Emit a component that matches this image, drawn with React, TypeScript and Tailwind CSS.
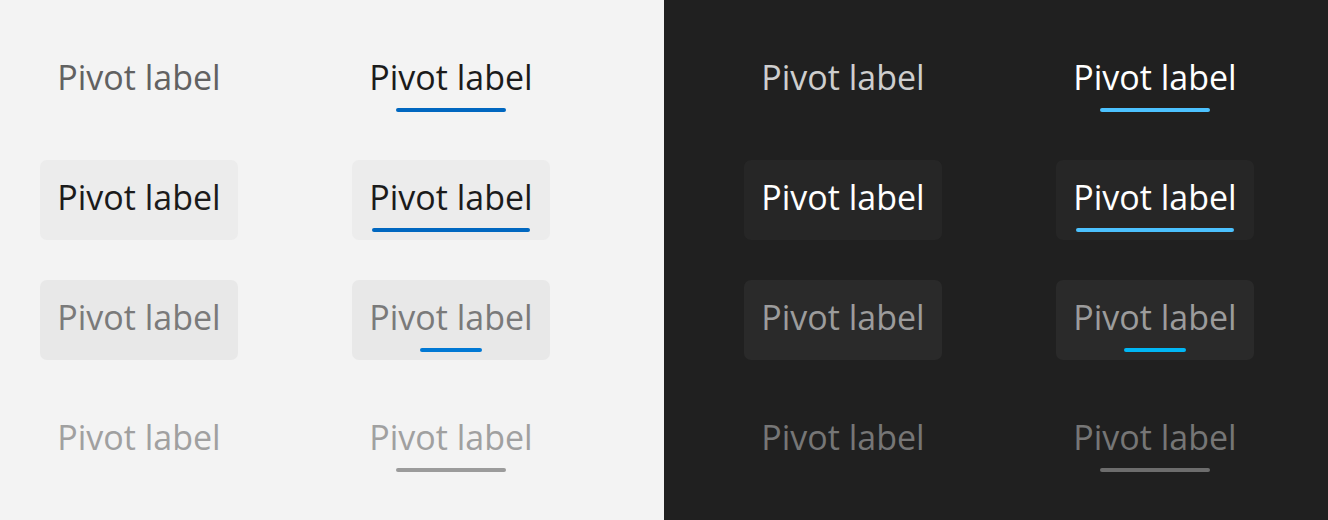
type Variant = 'rest' | 'selected' | 'hover' | 'hoverSelected' | 'pressed' | 'pressedSelected' | 'disabled' | 'disabledSelected'

type Theme = 'light' | 'dark'

interface PivotItemProps {
  theme: Theme
  variant: Variant
}

const styles: Record<Theme, Record<Variant, { box: string; text: string; bar?: string }>> = {
  light: {
    rest: { box: '', text: 'text-[#616161]' },
    selected: { box: '', text: 'text-[#1b1b1b]', bar: 'w-[110px] bg-[#0067c0]' },
    hover: { box: 'bg-[#ececec]', text: 'text-[#1b1b1b]' },
    hoverSelected: { box: 'bg-[#ececec]', text: 'text-[#1b1b1b]', bar: 'w-[158px] bg-[#0067c0]' },
    pressed: { box: 'bg-[#e8e8e8]', text: 'text-[#7a7a7a]' },
    pressedSelected: { box: 'bg-[#e8e8e8]', text: 'text-[#7a7a7a]', bar: 'w-[62px] bg-[#0078d4]' },
    disabled: { box: '', text: 'text-[#a0a0a0]' },
    disabledSelected: { box: '', text: 'text-[#a0a0a0]', bar: 'w-[110px] bg-[#9b9b9b]' },
  },
  dark: {
    rest: { box: '', text: 'text-[#cecece]' },
    selected: { box: '', text: 'text-white', bar: 'w-[110px] bg-[#4cc2ff]' },
    hover: { box: 'bg-[#262626]', text: 'text-white' },
    hoverSelected: { box: 'bg-[#262626]', text: 'text-white', bar: 'w-[158px] bg-[#4cc2ff]' },
    pressed: { box: 'bg-[#2a2a2a]', text: 'text-[#9c9c9c]' },
    pressedSelected: { box: 'bg-[#2a2a2a]', text: 'text-[#9c9c9c]', bar: 'w-[62px] bg-[#00b7f5]' },
    disabled: { box: '', text: 'text-[#767676]' },
    disabledSelected: { box: '', text: 'text-[#767676]', bar: 'w-[110px] bg-[#6d6d6d]' },
  },
}

const PivotItem = ({ theme, variant }: PivotItemProps) => {
  const s = styles[theme][variant]
  return (
    <div className={`relative flex h-[80px] w-[198px] items-center justify-center rounded-[7px] ${s.box}`}>
      <span className={`-mt-[7px] text-[34px] leading-none ${s.text}`}>Pivot label</span>
      {s.bar && (
        <div className="absolute bottom-[8px] left-0 right-0 flex justify-center">
          <div className={`h-[4px] rounded-full ${s.bar}`} />
        </div>
      )}
    </div>
  )
}

const rows: [Variant, Variant][] = [
  ['rest', 'selected'],
  ['hover', 'hoverSelected'],
  ['pressed', 'pressedSelected'],
  ['disabled', 'disabledSelected'],
]

const Panel = ({ theme }: { theme: Theme }) => (
  <div
    className={`h-full w-[664px] pt-[40px] ${
      theme === 'light' ? 'bg-[#f3f3f3] pl-[40px]' : 'bg-[#202020] pl-[80px]'
    }`}
  >
    <div className="grid grid-cols-[198px_198px] gap-x-[114px] gap-y-[40px]">
      {rows.map(([a, b]) => (
        <>
          <PivotItem key={a} theme={theme} variant={a} />
          <PivotItem key={b} theme={theme} variant={b} />
        </>
      ))}
    </div>
  </div>
)

export default function App() {
  return (
    <div className="flex h-[520px] w-[1328px] font-['Open_Sans',sans-serif]">
      <Panel theme="light" />
      <Panel theme="dark" />
    </div>
  )
}
